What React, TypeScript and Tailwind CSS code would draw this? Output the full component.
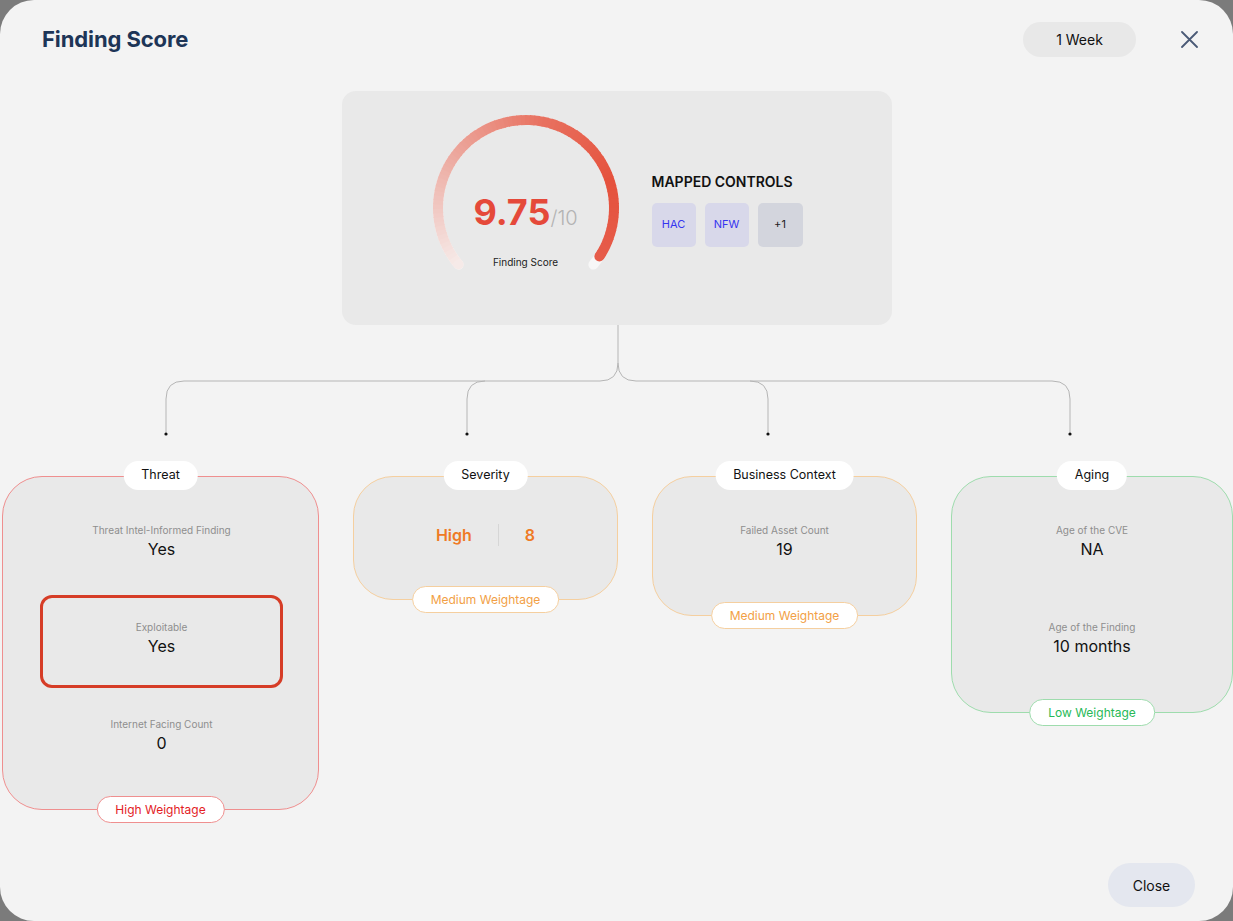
import React from "react";

// gauge geometry: arc opens at the bottom, 260deg sweep
const CX = 100;
const CY = 100;
const R = 88;
const START = 140;
const SWEEP = 260;

const polar = (deg: number): [number, number] => {
  const rad = (deg * Math.PI) / 180;
  return [CX + R * Math.cos(rad), CY + R * Math.sin(rad)];
};

const arc = (a0: number, a1: number) => {
  const [x0, y0] = polar(a0);
  const [x1, y1] = polar(a1);
  const large = a1 - a0 > 180 ? 1 : 0;
  return `M ${x0} ${y0} A ${R} ${R} 0 ${large} 1 ${x1} ${y1}`;
};

const stops: [number, [number, number, number]][] = [
  [0, [246, 234, 232]],
  [0.3, [236, 168, 158]],
  [0.55, [232, 114, 97]],
  [0.8, [229, 82, 61]],
  [1, [230, 92, 74]],
];

const colorAt = (t: number) => {
  for (let i = 1; i < stops.length; i++) {
    const [p1, c1] = stops[i];
    const [p0, c0] = stops[i - 1];
    if (t <= p1) {
      const k = (t - p0) / (p1 - p0);
      const c = c0.map((v, j) => Math.round(v + (c1[j] - v) * k));
      return `rgb(${c[0]},${c[1]},${c[2]})`;
    }
  }
  return "rgb(230,92,74)";
};

const Gauge = ({ value }: { value: number }) => {
  const end = START + SWEEP * (value / 10);
  const n = 90;
  const step = (end - START) / n;
  const segs = Array.from({ length: n }, (_, i) => ({
    d: arc(START + i * step, Math.min(end, START + (i + 1) * step + 0.6)),
    c: colorAt(i / (n - 1)),
  }));
  const [sx, sy] = polar(START);
  const [ex, ey] = polar(end);

  return (
    <div className="relative w-[200px] h-[200px] shrink-0">
      <svg width="200" height="200" viewBox="0 0 200 200" className="block">
        <path d={arc(START, START + SWEEP)} fill="none" stroke="#f7f7f7" strokeWidth="10" strokeLinecap="round" />
        {segs.map((s, i) => (
          <path key={i} d={s.d} fill="none" stroke={s.c} strokeWidth="10" />
        ))}
        <circle cx={sx} cy={sy} r="5" fill={colorAt(0)} />
        <circle cx={ex} cy={ey} r="5" fill={colorAt(1)} />
      </svg>
      {/* score text sits over the dial */}
      <div className="absolute inset-x-0 top-[84px] flex justify-center items-baseline">
        <span className="text-[36px] leading-[40px] font-bold text-[#e5493a]">9.75</span>
        <span className="text-[20px] leading-[24px] font-light text-[#b3b3b3]">/10</span>
      </div>
      <div className="absolute inset-x-0 top-[147px] text-center text-[10px] leading-[14px] text-[#222]">
        Finding Score
      </div>
    </div>
  );
};

const Connectors = () => (
  <svg width="1233" height="151" viewBox="0 0 1233 151" className="block shrink-0">
    <g fill="none" stroke="#b5b5b5" strokeWidth="1">
      <path d="M618 0 V38 Q618 56 600 56 H184 Q166 56 166 74 V109" />
      <path d="M618 38 Q618 56 636 56 H1052 Q1070 56 1070 74 V109" />
      <path d="M485 56 Q467 56 467 74 V109" />
      <path d="M750 56 Q768 56 768 74 V109" />
    </g>
    <g fill="#111">
      <circle cx="166" cy="109" r="1.6" />
      <circle cx="467" cy="109" r="1.6" />
      <circle cx="768" cy="109" r="1.6" />
      <circle cx="1070" cy="109" r="1.6" />
    </g>
  </svg>
);

const Metric = ({ label, value, highlight = false }: { label: string; value: string; highlight?: boolean }) => (
  <div
    className={
      highlight
        ? "h-[93px] pb-[6px] rounded-[12px] border-[3px] border-[#d63d27] flex flex-col items-center justify-center"
        : "h-[93px] pb-[6px] rounded-[12px] border-[3px] border-transparent flex flex-col items-center justify-center"
    }
  >
    <div className="text-[10px] leading-[14px] text-[#8e8e8e]">{label}</div>
    <div className="mt-[1px] text-[16px] leading-[22px] text-[#111]">{value}</div>
  </div>
);

type CardProps = {
  title: string;
  badge: string;
  className: string;
  badgeClass: string;
  children: React.ReactNode;
};

const FactorCard = ({ title, badge, className, badgeClass, children }: CardProps) => (
  <div className={`relative shrink-0 rounded-[40px] border bg-[#e9e9e9] pt-[21px] pb-[24px] ${className}`}>
    <div className="absolute -top-[16px] left-1/2 -translate-x-1/2 h-[29px] px-[18px] rounded-full bg-white flex items-center text-[12.5px] text-[#111] whitespace-nowrap">
      {title}
    </div>
    {children}
    <div
      className={`absolute -bottom-[14px] left-1/2 -translate-x-1/2 h-[27px] px-[18px] rounded-full bg-white border flex items-center text-[12px] whitespace-nowrap ${badgeClass}`}
    >
      {badge}
    </div>
  </div>
);

export default function App() {
  return (
    <div className="min-h-screen bg-[#7b7b7b] font-[Inter,sans-serif]">
      <div className="h-screen rounded-[34px] bg-[#f3f3f3] flex flex-col overflow-hidden">
        {/* header */}
        <div className="flex items-center pt-[22px] pl-[42px] pr-[35px]">
          <h1 className="text-[22px] font-bold text-[#1d3557] tracking-[-0.1px]">Finding Score</h1>
          <button className="ml-auto h-[35px] w-[113px] rounded-full bg-[#e8e8e8] text-[14px] text-[#111]">1 Week</button>
          <button className="ml-[45px] w-[17px] h-[17px]" aria-label="close">
            <svg width="17" height="17" viewBox="0 0 17 17" fill="none" stroke="#4a5a76" strokeWidth="1.8" strokeLinecap="round">
              <path d="M1 1 L16 16 M16 1 L1 16" />
            </svg>
          </button>
        </div>

        {/* score summary */}
        <div className="mt-[34px] mx-auto w-[550px] h-[234px] shrink-0 rounded-[14px] bg-[#e9e9e9] flex items-center pl-[84px]">
          <Gauge value={9.75} />
          <div className="ml-[26px] mt-[2px]">
            <div className="text-[14px] font-semibold text-[#111] leading-[20px]">MAPPED CONTROLS</div>
            <div className="mt-[11px] flex gap-[9px]">
              <div className="w-[44px] h-[44px] rounded-[5px] bg-[#d8d8ea] flex items-center justify-center text-[11px] text-[#3535f0]">HAC</div>
              <div className="w-[44px] h-[44px] rounded-[5px] bg-[#d8d8ea] flex items-center justify-center text-[11px] text-[#3535f0]">NFW</div>
              <div className="w-[45px] h-[44px] rounded-[5px] bg-[#d3d5dd] flex items-center justify-center text-[11px] text-[#222]">+1</div>
            </div>
          </div>
        </div>

        <Connectors />

        {/* factor cards */}
        <div className="flex items-start gap-[34px] pl-[2px]">
          <FactorCard
            title="Threat"
            badge="High Weightage"
            className="w-[317px] border-[#ef8f8f] pl-[37px] pr-[35px]"
            badgeClass="border-[#ef8f8f] text-[#e3211f]"
          >
            <div className="flex flex-col gap-[4px]">
              <Metric label="Threat Intel-Informed Finding" value="Yes" />
              <Metric label="Exploitable" value="Yes" highlight />
              <Metric label="Internet Facing Count" value="0" />
            </div>
          </FactorCard>

          <FactorCard
            title="Severity"
            badge="Medium Weightage"
            className="w-[265px] border-[#f5cf9f]"
            badgeClass="border-[#f5cf9f] text-[#f2a045]"
          >
            <div className="h-[77px] pb-[4px] flex items-center justify-center gap-[26px]">
              <span className="text-[16px] font-semibold text-[#ef7a25]">High</span>
              <span className="w-px h-[22px] bg-[#d6d6d6]" />
              <span className="text-[16px] font-semibold text-[#ef7a25]">8</span>
            </div>
          </FactorCard>

          <FactorCard
            title="Business Context"
            badge="Medium Weightage"
            className="w-[265px] border-[#f5cf9f] px-[20px]"
            badgeClass="border-[#f5cf9f] text-[#f2a045]"
          >
            <Metric label="Failed Asset Count" value="19" />
          </FactorCard>

          <FactorCard
            title="Aging"
            badge="Low Weightage"
            className="w-[282px] border-[#9edcad] px-[20px]"
            badgeClass="border-[#9edcad] text-[#27b957]"
          >
            <div className="flex flex-col gap-[4px]">
              <Metric label="Age of the CVE" value="NA" />
              <Metric label="Age of the Finding" value="10 months" />
            </div>
          </FactorCard>
        </div>

        <button className="mt-auto mb-[14px] mr-[38px] self-end h-[44px] w-[87px] rounded-full bg-[#e4e7ef] text-[14px] text-[#111]">
          Close
        </button>
      </div>
    </div>
  );
}
